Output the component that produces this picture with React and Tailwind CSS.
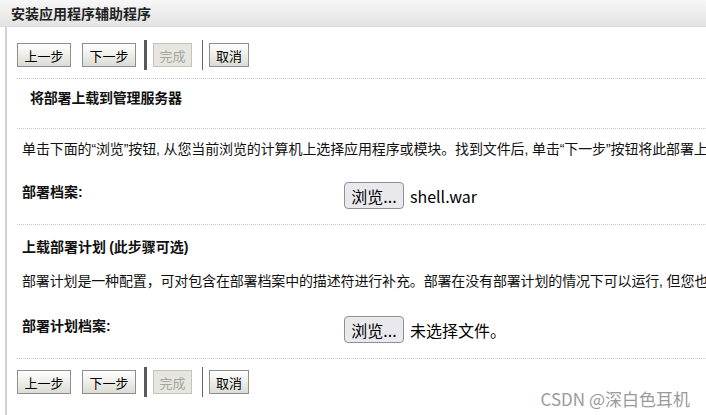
import React from "react";

const cjk = { fontFamily: '"Noto Sans CJK SC", "Liberation Sans", sans-serif' };

function StepButton({ label, width, disabled }) {
  return (
    <button
      type="button"
      disabled={disabled}
      className={
        "h-[24px] border text-[13px] leading-none flex items-center justify-center " +
        width +
        (disabled
          ? " border-[#c4c4bc] bg-[#e6e6df] text-[#a6a6a0]"
          : " border-[#8e8e8e] bg-gradient-to-b from-[#ffffff] to-[#dcdcd4] text-black")
      }
    >
      {label}
    </button>
  );
}

function ButtonBar() {
  return (
    <div className="flex items-center h-[30px]">
      <StepButton label="上一步" width="w-[54px]" />
      <div className="w-[11px]" />
      <StepButton label="下一步" width="w-[54px]" />
      <div className="ml-[8px] mr-[6px] w-[3px] h-[30px] bg-[#5a5a5a]" />
      <StepButton label="完成" width="w-[39px]" disabled />
      <div className="ml-[10px] mr-[6px] w-[1px] h-[30px] bg-[#666]" />
      <StepButton label="取消" width="w-[40px]" />
    </div>
  );
}

function FileField({ value }) {
  return (
    <div className="flex items-center gap-[6px]">
      <button
        type="button"
        className="h-[27px] w-[60px] rounded-[4px] border border-[#8f8f9d] bg-[#e9e9ed] text-[16px] text-black leading-none"
      >
        浏览...
      </button>
      <span className="text-[16px] text-black leading-none">{value}</span>
    </div>
  );
}

function Dotted() {
  return <div className="border-t border-dotted border-[#c8c8c8]" />;
}

// narrow latin punctuation inside CJK lines
function L({ children }) {
  return <span className="font-['Liberation_Sans']">{children}</span>;
}

export default function App() {
  return (
    <div className="relative w-[706px] h-[415px] overflow-hidden bg-white text-[#111]" style={cjk}>
      <div className="h-[27px] pl-[11px] flex items-center bg-gradient-to-b from-[#f7f7f7] to-[#e3e3e3] border-b border-[#dadada] text-[14px] font-bold text-[#222]">
        安装应用程序辅助程序
      </div>

      <div className="ml-[5px] border-l-2 border-[#d2d2d2] pl-[10px] h-[388px]">
        <div className="pt-[13px]">
          <ButtonBar />
        </div>
        <div className="mt-[8px]">
          <Dotted />
        </div>

        <div className="h-[49px] pt-[10px] pl-[13px] text-[14px] leading-[16px] font-bold whitespace-nowrap tracking-[-0.2px]">
          将部署上载到管理服务器
        </div>
        <Dotted />

        <div className="h-[53px] pt-[11px] pl-[5px] text-[14px] leading-[16px] whitespace-nowrap tracking-[-0.12px]">
          单击下面的<L>“</L>浏览<L>”</L>按钮<L>, </L>从您当前浏览的计算机上选择应用程序或模块。找到文件后<L>, </L>单击<L>“</L>下一步<L>”</L>按钮将此部署上载到管理服务器。
        </div>

        <div className="h-[42px] flex items-start pl-[5px]">
          <div className="w-[322px] pt-[1px] text-[14px] leading-[16px] font-bold">部署档案<L>:</L></div>
          <FileField value="shell.war" />
        </div>
        <Dotted />

        <div className="pt-[13px] pl-[5px] text-[14px] leading-[16px] font-bold whitespace-nowrap">
          上载部署计划 <L>(</L>此步骤可选<L>)</L>
        </div>
        <div className="mt-[17px] pl-[5px] text-[14px] leading-[16px] whitespace-nowrap tracking-[-0.15px]">
          部署计划是一种配置，可对包含在部署档案中的描述符进行补充。部署在没有部署计划的情况下可以运行<L>, </L>但您也可以使用部署计划来配置部署。
        </div>

        <div className="mt-[27px] h-[42px] flex items-start pl-[5px]">
          <div className="w-[322px] pt-[1px] text-[14px] leading-[16px] font-bold">部署计划档案<L>:</L></div>
          <FileField value="未选择文件。" />
        </div>
        <Dotted />

        <div className="pt-[8px]">
          <ButtonBar />
        </div>
      </div>

      <div className="absolute right-[16px] bottom-[8px] text-[17px] text-[#9a9a9a] leading-none whitespace-nowrap">
        CSDN @深白色耳机
      </div>
    </div>
  );
}
